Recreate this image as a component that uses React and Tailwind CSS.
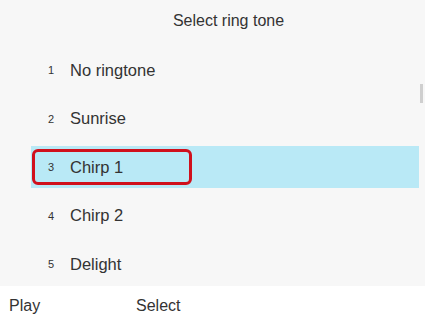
import React from "react";

const tones = ["No ringtone", "Sunrise", "Chirp 1", "Chirp 2", "Delight"];

export default function App() {
  return (
    <div
      className="w-[425px] h-[322px] bg-white flex flex-col text-[#333333] overflow-hidden"
      style={{ fontFamily: '"Liberation Sans", Arial, sans-serif' }}
    >
      {/* ================= LIST AREA ================= */}
      <div className="relative h-[286px] bg-[#f7f7f7] flex flex-col">
        <div className="h-[46px] shrink-0 flex items-center justify-center pl-[32px] pb-[4px]">
          <span className="text-[16px]">Select ring tone</span>
        </div>

        {tones.map((t, i) => (
          <div key={t} className="h-[48.5px] shrink-0 flex items-center pl-[31px] pr-[6px]">
            <div
              className={
                i === 2
                  ? "relative w-full h-[42px] bg-[#b9e9f6] flex items-center"
                  : "relative w-full h-[42px] flex items-center"
              }
            >
              <span className="w-[39px] pl-[17px] text-[11px]">{i + 1}</span>
              <span className="text-[16.5px]">{t}</span>
              {i === 2 && (
                <div className="absolute left-[1px] top-[3px] w-[160px] h-[36px] border-[3px] border-[#d0101c] rounded-[6px]" />
              )}
            </div>
          </div>
        ))}

        {/* scrollbar */}
        <div className="absolute left-[420px] top-[84px] w-[3px] h-[19px] bg-[#cfcfcf]" />
      </div>

      {/* ================= SOFTKEYS ================= */}
      <div className="flex-1 flex items-center text-[16px] pt-[3px]">
        <span className="w-[136px] pl-[9px]">Play</span>
        <span>Select</span>
      </div>
    </div>
  );
}
